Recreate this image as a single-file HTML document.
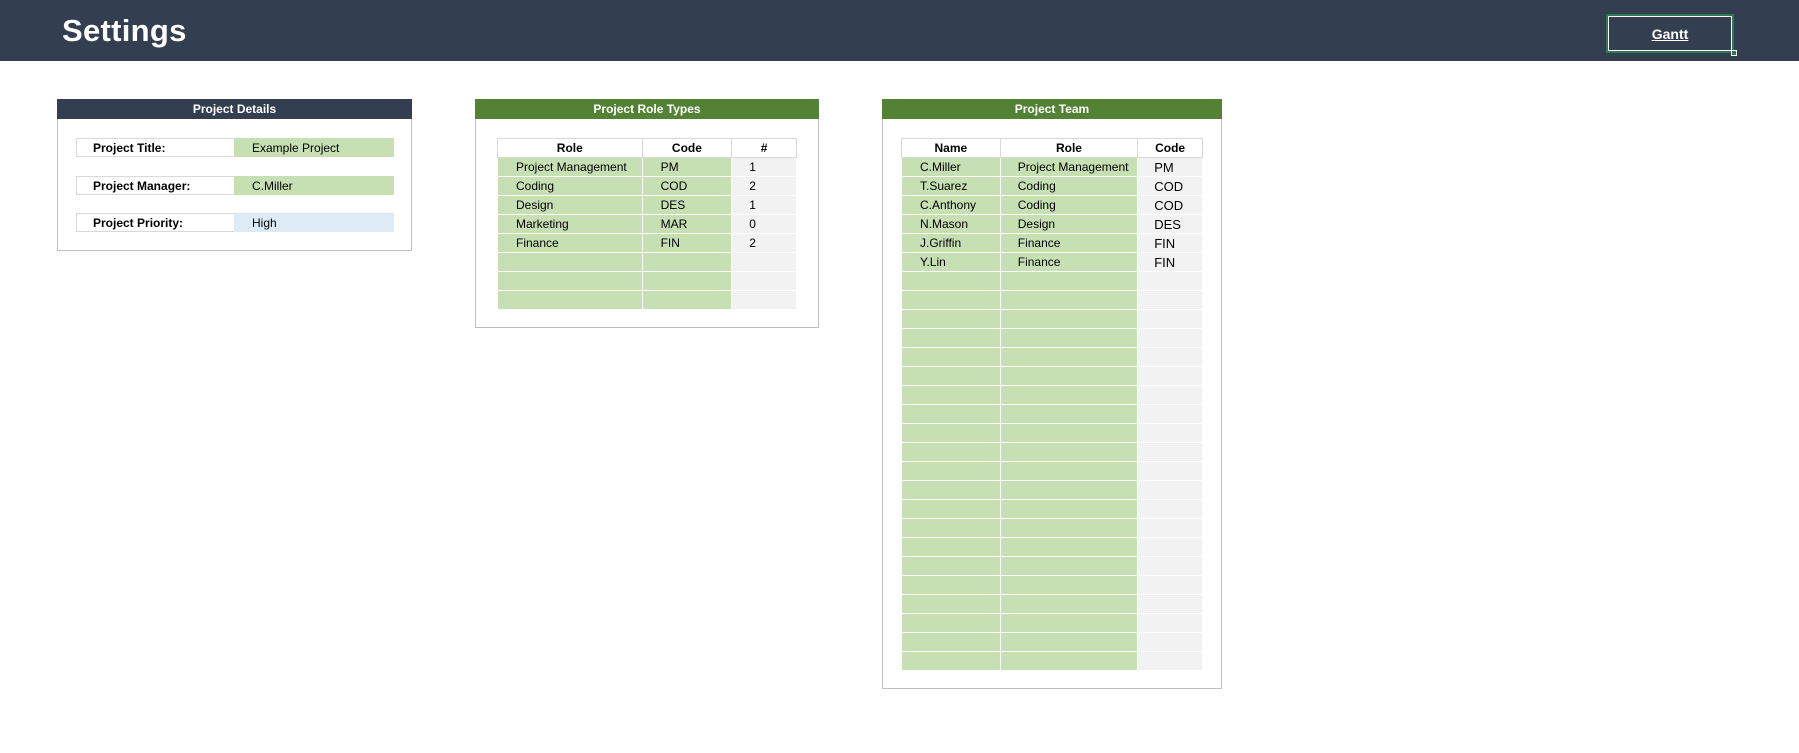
<!DOCTYPE html>
<html><head><meta charset="utf-8"><style>
*{margin:0;padding:0;box-sizing:border-box}
body{width:1799px;height:753px;background:#fff;font-family:"Liberation Sans",Arial,sans-serif;position:relative;overflow:hidden;color:#000}
.hdr{position:absolute;left:0;top:0;width:1799px;height:61px;background:#333f50}
.title{position:absolute;left:62px;top:13px;font-size:31px;font-weight:bold;color:#fff;letter-spacing:0.3px}
.btn{position:absolute;left:1606px;top:14px;width:128px;height:39px;border:2px solid #2f7a4c;}
.btn .in{position:absolute;inset:0;border:1px solid #fff;color:#fff;font-weight:bold;font-size:14px;text-decoration:underline;text-align:center;line-height:35px}
.btn .h{position:absolute;right:-5px;bottom:-5px;width:6px;height:6px;background:#2f7a4c;border:1px solid #fff}
.box{position:absolute;border:1px solid #bfbfbf;background:#fff}
.bh{height:20px;color:#fff;font-weight:bold;font-size:12px;text-align:center;line-height:21px;margin:-1px -1px 0 -1px}
.abs{position:absolute}
.cell{position:absolute;height:19px;font-size:12px;line-height:20px}
table{position:absolute;border-collapse:collapse;font-size:12px}
td,th{height:19px;padding:0;line-height:17px;border:1px solid #fff;overflow:hidden}
td{padding-top:1px}
th{background:#fff;border:1px solid #d9d9d9;font-weight:bold;font-size:12px;text-align:center}
td.g{background:#c6e0b4}
td.y{background:#f2f2f2}
</style></head><body>
<div class="hdr"></div>
<div class="title">Settings</div>
<div class="btn"><div class="in">Gantt</div><div class="h"></div></div>

<div class="box" style="left:57px;top:99px;width:355px;height:152px">
<div class="bh" style="background:#333f50">Project Details</div>
</div>
<div class="abs" style="left:76px;top:138px;width:318px;height:19px;border:1px solid #d9d9d9;border-right:none"></div>
<div class="abs" style="left:234px;top:138px;width:160px;height:19px;background:#c6e0b4"></div>
<div class="cell" style="left:93px;top:138px;font-weight:bold">Project Title:</div>
<div class="cell" style="left:252px;top:138px">Example Project</div>
<div class="abs" style="left:76px;top:176px;width:318px;height:19px;border:1px solid #d9d9d9;border-right:none"></div>
<div class="abs" style="left:234px;top:176px;width:160px;height:19px;background:#c6e0b4"></div>
<div class="cell" style="left:93px;top:176px;font-weight:bold">Project Manager:</div>
<div class="cell" style="left:252px;top:176px">C.Miller</div>
<div class="abs" style="left:76px;top:213px;width:318px;height:19px;border:1px solid #d9d9d9;border-right:none"></div>
<div class="abs" style="left:234px;top:213px;width:160px;height:19px;background:#ddebf7"></div>
<div class="cell" style="left:93px;top:213px;font-weight:bold">Project Priority:</div>
<div class="cell" style="left:252px;top:213px">High</div>

<div class="box" style="left:475px;top:99px;width:344px;height:229px">
<div class="bh" style="background:#548235">Project Role Types</div>
</div>
<table style="left:497px;top:138px;width:300px">
<colgroup><col style="width:145px"><col style="width:90px"><col style="width:65px"></colgroup>
<tr><th>Role</th><th>Code</th><th>#</th></tr>
<tr><td class="g" style="padding-left:18px">Project Management</td><td class="g" style="padding-left:18px">PM</td><td class="y" style="padding-left:17px">1</td></tr>
<tr><td class="g" style="padding-left:18px">Coding</td><td class="g" style="padding-left:18px">COD</td><td class="y" style="padding-left:17px">2</td></tr>
<tr><td class="g" style="padding-left:18px">Design</td><td class="g" style="padding-left:18px">DES</td><td class="y" style="padding-left:17px">1</td></tr>
<tr><td class="g" style="padding-left:18px">Marketing</td><td class="g" style="padding-left:18px">MAR</td><td class="y" style="padding-left:17px">0</td></tr>
<tr><td class="g" style="padding-left:18px">Finance</td><td class="g" style="padding-left:18px">FIN</td><td class="y" style="padding-left:17px">2</td></tr>
<tr><td class="g"></td><td class="g"></td><td class="y"></td></tr>
<tr><td class="g"></td><td class="g"></td><td class="y"></td></tr>
<tr><td class="g"></td><td class="g"></td><td class="y"></td></tr>
</table>

<div class="box" style="left:882px;top:99px;width:340px;height:590px">
<div class="bh" style="background:#548235">Project Team</div>
</div>
<table id="team" style="left:901px;top:138px;width:302px">
<colgroup><col style="width:99px"><col style="width:138px"><col style="width:65px"></colgroup>
<tr><th>Name</th><th>Role</th><th>Code</th></tr>
<tr><td class="g" style="padding-left:18px">C.Miller</td><td class="g" style="padding-left:17px">Project Management</td><td class="y" style="padding-left:16px;font-size:13px">PM</td></tr>
<tr><td class="g" style="padding-left:18px">T.Suarez</td><td class="g" style="padding-left:17px">Coding</td><td class="y" style="padding-left:16px;font-size:13px">COD</td></tr>
<tr><td class="g" style="padding-left:18px">C.Anthony</td><td class="g" style="padding-left:17px">Coding</td><td class="y" style="padding-left:16px;font-size:13px">COD</td></tr>
<tr><td class="g" style="padding-left:18px">N.Mason</td><td class="g" style="padding-left:17px">Design</td><td class="y" style="padding-left:16px;font-size:13px">DES</td></tr>
<tr><td class="g" style="padding-left:18px">J.Griffin</td><td class="g" style="padding-left:17px">Finance</td><td class="y" style="padding-left:16px;font-size:13px">FIN</td></tr>
<tr><td class="g" style="padding-left:18px">Y.Lin</td><td class="g" style="padding-left:17px">Finance</td><td class="y" style="padding-left:16px;font-size:13px">FIN</td></tr>
<tr><td class="g"></td><td class="g"></td><td class="y"></td></tr>
<tr><td class="g"></td><td class="g"></td><td class="y"></td></tr>
<tr><td class="g"></td><td class="g"></td><td class="y"></td></tr>
<tr><td class="g"></td><td class="g"></td><td class="y"></td></tr>
<tr><td class="g"></td><td class="g"></td><td class="y"></td></tr>
<tr><td class="g"></td><td class="g"></td><td class="y"></td></tr>
<tr><td class="g"></td><td class="g"></td><td class="y"></td></tr>
<tr><td class="g"></td><td class="g"></td><td class="y"></td></tr>
<tr><td class="g"></td><td class="g"></td><td class="y"></td></tr>
<tr><td class="g"></td><td class="g"></td><td class="y"></td></tr>
<tr><td class="g"></td><td class="g"></td><td class="y"></td></tr>
<tr><td class="g"></td><td class="g"></td><td class="y"></td></tr>
<tr><td class="g"></td><td class="g"></td><td class="y"></td></tr>
<tr><td class="g"></td><td class="g"></td><td class="y"></td></tr>
<tr><td class="g"></td><td class="g"></td><td class="y"></td></tr>
<tr><td class="g"></td><td class="g"></td><td class="y"></td></tr>
<tr><td class="g"></td><td class="g"></td><td class="y"></td></tr>
<tr><td class="g"></td><td class="g"></td><td class="y"></td></tr>
<tr><td class="g"></td><td class="g"></td><td class="y"></td></tr>
<tr><td class="g"></td><td class="g"></td><td class="y"></td></tr>
<tr><td class="g"></td><td class="g"></td><td class="y"></td></tr>
</table>
</body></html>
